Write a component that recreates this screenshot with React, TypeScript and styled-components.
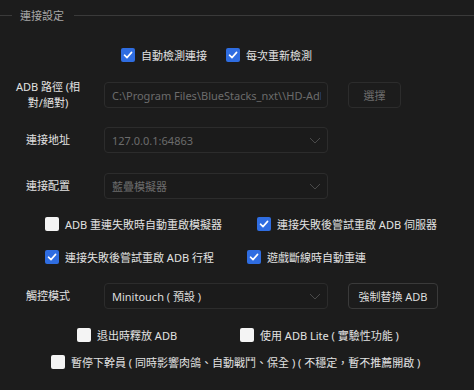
import React from "react";
import styled, { createGlobalStyle } from "styled-components";

const GlobalStyle = createGlobalStyle`
  html, body {
    margin: 0;
    padding: 0;
    background: #1c1c1c;
  }
  body {
    font-family: "Noto Sans", "Noto Sans CJK TC", sans-serif;
    font-size: 11px;
    color: #e2e2e2;
  }
`;

const Panel = styled.section`
  width: 474px;
  height: 390px;
  overflow: hidden;
  display: flex;
  flex-direction: column;
`;

const Header = styled.div`
  height: 30px;
  display: flex;
  align-items: center;

  &::before,
  &::after {
    content: "";
    height: 1px;
    background: #3a3a3a;
  }
  &::before {
    width: 12px;
    margin-right: 8px;
  }
  &::after {
    flex: 1;
    margin-left: 10px;
  }
`;

const Legend = styled.span`
  color: #a8a8a8;
  font-size: 11px;
`;

const CheckRow = styled.div<{ $mt: number; $left: number }>`
  display: flex;
  align-items: center;
  height: 20px;
  margin-top: ${(p) => p.$mt}px;
  padding-left: ${(p) => p.$left}px;
`;

const CheckItem = styled.label<{ $w?: number }>`
  display: flex;
  align-items: center;
  gap: 6px;
  white-space: nowrap;
  ${(p) => (p.$w ? `width: ${p.$w}px; flex: none;` : "")}
`;

const Box = styled.span<{ $on: boolean }>`
  width: 14px;
  height: 14px;
  border-radius: 2px;
  flex: none;
  display: flex;
  align-items: center;
  justify-content: center;
  background: ${(p) => (p.$on ? "#2f6de1" : "#f4f4f4")};
`;

const FormRow = styled.div<{ $mt: number }>`
  display: flex;
  align-items: center;
  height: 26px;
  margin-top: ${(p) => p.$mt}px;
`;

const Label = styled.div`
  width: 96px;
  flex: none;
  display: flex;
  justify-content: center;
  text-align: center;
  line-height: 16px;

  span {
    max-width: 68px;
  }
`;

const Field = styled.div<{ $dim?: boolean }>`
  margin-left: 8px;
  width: 224px;
  height: 26px;
  box-sizing: border-box;
  border: 1px solid #2c2c2c;
  border-radius: 4px;
  background: #1b1b1b;
  display: flex;
  align-items: center;
  padding: 0 6px 0 7px;
  color: ${(p) => (p.$dim ? "#6c6c6c" : "#dedede")};
  white-space: nowrap;
  overflow: hidden;

  span {
    flex: 1;
    overflow: hidden;
  }
`;

const Button = styled.button<{ $w: number; $dim?: boolean }>`
  margin-left: 20px;
  width: ${(p) => p.$w}px;
  height: 26px;
  box-sizing: border-box;
  border: 1px solid ${(p) => (p.$dim ? "#2c2c2c" : "#3a3a3a")};
  border-radius: 4px;
  background: #1c1c1c;
  color: ${(p) => (p.$dim ? "#6c6c6c" : "#dedede")};
  font: inherit;
  padding: 0;
`;

const Check = ({ on, w, children }: { on: boolean; w?: number; children: React.ReactNode }) => (
  <CheckItem $w={w}>
    <Box $on={on}>
      {on && (
        <svg width="10" height="10" viewBox="0 0 10 10">
          <polyline points="1.5,5.2 4,7.6 8.6,2.4" fill="none" stroke="#fff" strokeWidth="1.6" strokeLinecap="round" strokeLinejoin="round" />
        </svg>
      )}
    </Box>
    <span>{children}</span>
  </CheckItem>
);

const Chevron = () => (
  <svg width="12" height="7" viewBox="0 0 12 7">
    <polyline points="1,1 6,6 11,1" fill="none" stroke="#4a4a4a" strokeWidth="1" />
  </svg>
);

export default function App() {
  return (
    <>
      <GlobalStyle />
      <Panel>
        <Header>
          <Legend>連接設定</Legend>
        </Header>

        <CheckRow $mt={15} $left={121}>
          <Check on w={105}>自動檢測連接</Check>
          <Check on>每次重新檢測</Check>
        </CheckRow>

        <FormRow $mt={17}>
          <Label>
            <span>ADB 路徑 (相對/絕對)</span>
          </Label>
          <Field $dim>
            <span>C:\Program Files\BlueStacks_nxt\\HD-Adb.exe</span>
          </Field>
          <Button $w={53} $dim>選擇</Button>
        </FormRow>

        <FormRow $mt={19}>
          <Label>
            <span>連接地址</span>
          </Label>
          <Field $dim>
            <span>127.0.0.1:64863</span>
            <Chevron />
          </Field>
        </FormRow>

        <FormRow $mt={20}>
          <Label>
            <span>連接配置</span>
          </Label>
          <Field $dim>
            <span>藍疊模擬器</span>
            <Chevron />
          </Field>
        </FormRow>

        <CheckRow $mt={15} $left={45}>
          <Check on={false} w={212}>ADB 重連失敗時自動重啟模擬器</Check>
          <Check on>連接失敗後嘗試重啟 ADB 伺服器</Check>
        </CheckRow>

        <CheckRow $mt={13} $left={45}>
          <Check on w={202}>連接失敗後嘗試重啟 ADB 行程</Check>
          <Check on>遊戲斷線時自動重連</Check>
        </CheckRow>

        <FormRow $mt={16}>
          <Label>
            <span>觸控模式</span>
          </Label>
          <Field>
            <span>Minitouch ( 預設 )</span>
            <Chevron />
          </Field>
          <Button $w={90}>強制替換 ADB</Button>
        </FormRow>

        <CheckRow $mt={16} $left={77}>
          <Check on={false} w={163}>退出時釋放 ADB</Check>
          <Check on={false}>使用 ADB Lite ( 實驗性功能 )</Check>
        </CheckRow>

        <CheckRow $mt={7} $left={51}>
          <Check on={false}>暫停下幹員 ( 同時影響肉鴿、自動戰鬥、保全 ) ( 不穩定，暫不推薦開啟 )</Check>
        </CheckRow>
      </Panel>
    </>
  );
}
